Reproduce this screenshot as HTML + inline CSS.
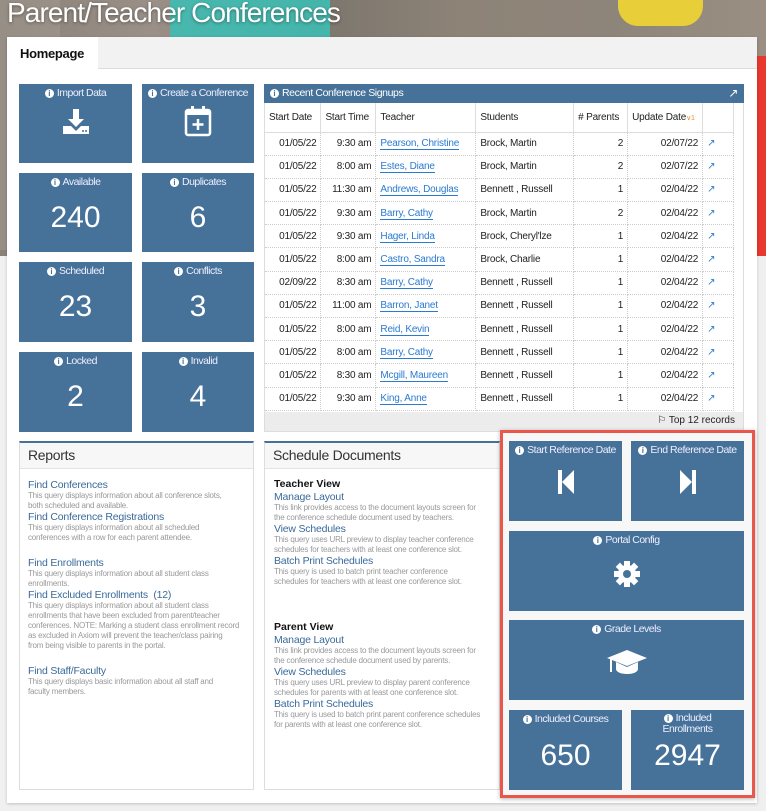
<!DOCTYPE html>
<html><head><meta charset="utf-8"><style>
*{box-sizing:border-box;margin:0;padding:0}
body{width:766px;height:811px;overflow:hidden;background:#f0f0f0;font-family:"Liberation Sans",sans-serif;position:relative}
.abs{position:absolute}
.bg{left:0;top:0;width:766px;height:256px;background:linear-gradient(90deg,#8a8178 0%,#9a9088 20%,#7b756c 40%,#8d8377 60%,#8e857a 80%,#9a8f82 100%)}
.title{left:7px;top:-3px;font-size:28px;color:#fff;letter-spacing:-0.9px;text-shadow:0 1px 3px rgba(0,0,0,.4)}
.panel{left:7px;top:37px;width:750px;height:766px;background:#fff;box-shadow:0 1px 3px rgba(0,0,0,.2)}
.tabbar{left:7px;top:37px;width:750px;height:32px;background:rgba(240,240,240,.85);border-bottom:1px solid #ddd}
.tab{left:7px;top:37px;width:91px;height:33px;background:#fff;font-weight:bold;font-size:13px;padding:9px 0 0 13px;color:#111;letter-spacing:-0.3px}
.tile{position:absolute;background:#46729a;color:#fff;text-align:center}
.tile .h{font-size:10.5px;margin-top:3px;color:#eef;letter-spacing:-0.5px;white-space:nowrap}
.tile .n{font-size:30px;margin-top:13px}
.i{display:inline-block;width:9px;height:9px;border-radius:50%;background:#fff;color:#46729a;font-size:8px;line-height:9px;font-weight:bold;vertical-align:0px;margin-right:3px;text-align:center;letter-spacing:0}
table{border-collapse:collapse;font-size:10px;color:#222;letter-spacing:-0.2px}
td{height:23.2px;border-bottom:1px dotted #ccc;border-right:1px dotted #ccc;padding:0 4px;white-space:nowrap}
th{height:29px;font-weight:normal;text-align:left;padding:0 4px;border-right:1px solid #ddd;border-bottom:1px solid #ddd;font-size:10px;white-space:nowrap}
.r{text-align:right}
a{color:#2a7ad0;text-decoration:none;border-bottom:1px solid #2a7ad0}
.box{position:absolute;border:1px solid #ddd;border-top:2px solid #46729a;background:#fff}
.box .hd{background:#f7f7f7;border-bottom:1px solid #e3e3e3;height:26px;font-size:14px;padding:4px 8px;color:#333;letter-spacing:-0.3px}
.lk{color:#3a6a9a;font-size:10.5px;line-height:12px;letter-spacing:-0.2px;white-space:nowrap}
.ds{color:#999;font-size:8px;line-height:10px;white-space:nowrap;letter-spacing:-0.2px}
.bh{font-weight:bold;font-size:10.5px;color:#111;line-height:13px}
</style></head><body>
<div class="abs bg"></div>
<div class="abs" style="left:170px;top:0;width:160px;height:130px;background:#3fbcb2;border-radius:0 0 70px 70px;opacity:.9"></div>
<div class="abs" style="left:618px;top:0;width:85px;height:26px;background:#e8cf3a;border-radius:0 0 20px 20px"></div>
<div class="abs" style="left:0;top:0;width:60px;height:250px;background:#a39b91;opacity:.5"></div>
<div class="abs" style="left:757px;top:56px;width:9px;height:200px;background:#e8382e"></div>
<div class="abs title">Parent/Teacher Conferences</div>
<div class="abs panel"></div>
<div class="abs tabbar"></div>
<div class="abs tab">Homepage</div>

<div class="tile" style="left:19px;top:84px;width:113px;height:79px"><div class="h"><span class="i">i</span>Import Data</div>
<svg width="30" height="30" viewBox="0 0 30 30" style="margin-top:8px"><path d="M12 2h6v10h5l-8 8-8-8h5z" fill="#fff"/><path d="M2 19h8l5 5 5-5h8v8H2z" fill="#fff"/><circle cx="22" cy="24" r="1" fill="#46729a"/><circle cx="25" cy="24" r="1" fill="#46729a"/></svg></div>
<div class="tile" style="left:142px;top:84px;width:112px;height:79px"><div class="h"><span class="i">i</span>Create a Conference</div>
<svg width="30" height="32" viewBox="0 0 30 32" style="margin-top:6px"><rect x="3" y="5" width="24" height="25" rx="2" fill="none" stroke="#fff" stroke-width="2.5"/><rect x="3" y="5" width="24" height="5" fill="#fff"/><rect x="8" y="1" width="3" height="7" fill="#fff"/><rect x="19" y="1" width="3" height="7" fill="#fff"/><path d="M15 14v11M9.5 19.5h11" stroke="#fff" stroke-width="2.5"/></svg></div>
<div class="tile" style="left:19px;top:173px;width:113px;height:79px"><div class="h"><span class="i">i</span>Available</div><div class="n">240</div></div>
<div class="tile" style="left:142px;top:173px;width:112px;height:79px"><div class="h"><span class="i">i</span>Duplicates</div><div class="n">6</div></div>
<div class="tile" style="left:19px;top:262px;width:113px;height:80px"><div class="h"><span class="i">i</span>Scheduled</div><div class="n">23</div></div>
<div class="tile" style="left:142px;top:262px;width:112px;height:80px"><div class="h"><span class="i">i</span>Conflicts</div><div class="n">3</div></div>
<div class="tile" style="left:19px;top:352px;width:113px;height:80px"><div class="h"><span class="i">i</span>Locked</div><div class="n">2</div></div>
<div class="tile" style="left:142px;top:352px;width:112px;height:80px"><div class="h"><span class="i">i</span>Invalid</div><div class="n">4</div></div>

<div class="abs" style="left:264px;top:84px;width:480px;height:19px;background:#46729a;color:#fff;font-size:10.5px;padding:3px 6px;letter-spacing:-0.4px"><span class="i">i</span>Recent Conference Signups<span style="position:absolute;right:6px;top:2px;font-size:12px">&#x2197;</span></div>
<div class="abs" style="left:264px;top:103px;width:480px;height:329px;border:1px solid #ddd;border-top:none;background:#fff">
<table style="width:469px">
<tr><th style="width:56px">Start Date</th><th style="width:55px">Start Time</th><th style="width:100px">Teacher</th><th style="width:98px">Students</th><th style="width:54px">#&nbsp;Parents</th><th style="width:75px">Update Date<span style="color:#e8902a;font-size:7px">&#x2228;1</span></th><th style="width:31px"></th></tr>
<tr><td class="r">01/05/22</td><td class="r">9:30 am</td><td><a>Pearson, Christine</a></td><td>Brock, Martin</td><td class="r">2</td><td class="r">02/07/22</td><td style="color:#2a7ad0">&#x2197;</td></tr>
<tr><td class="r">01/05/22</td><td class="r">8:00 am</td><td><a>Estes, Diane</a></td><td>Brock, Martin</td><td class="r">2</td><td class="r">02/07/22</td><td style="color:#2a7ad0">&#x2197;</td></tr>
<tr><td class="r">01/05/22</td><td class="r">11:30 am</td><td><a>Andrews, Douglas</a></td><td>Bennett , Russell</td><td class="r">1</td><td class="r">02/04/22</td><td style="color:#2a7ad0">&#x2197;</td></tr>
<tr><td class="r">01/05/22</td><td class="r">9:30 am</td><td><a>Barry, Cathy</a></td><td>Brock, Martin</td><td class="r">2</td><td class="r">02/04/22</td><td style="color:#2a7ad0">&#x2197;</td></tr>
<tr><td class="r">01/05/22</td><td class="r">9:30 am</td><td><a>Hager, Linda</a></td><td>Brock, Cheryl'lze</td><td class="r">1</td><td class="r">02/04/22</td><td style="color:#2a7ad0">&#x2197;</td></tr>
<tr><td class="r">01/05/22</td><td class="r">8:00 am</td><td><a>Castro, Sandra</a></td><td>Brock, Charlie</td><td class="r">1</td><td class="r">02/04/22</td><td style="color:#2a7ad0">&#x2197;</td></tr>
<tr><td class="r">02/09/22</td><td class="r">8:30 am</td><td><a>Barry, Cathy</a></td><td>Bennett , Russell</td><td class="r">1</td><td class="r">02/04/22</td><td style="color:#2a7ad0">&#x2197;</td></tr>
<tr><td class="r">01/05/22</td><td class="r">11:00 am</td><td><a>Barron, Janet</a></td><td>Bennett , Russell</td><td class="r">1</td><td class="r">02/04/22</td><td style="color:#2a7ad0">&#x2197;</td></tr>
<tr><td class="r">01/05/22</td><td class="r">8:00 am</td><td><a>Reid, Kevin</a></td><td>Bennett , Russell</td><td class="r">1</td><td class="r">02/04/22</td><td style="color:#2a7ad0">&#x2197;</td></tr>
<tr><td class="r">01/05/22</td><td class="r">8:00 am</td><td><a>Barry, Cathy</a></td><td>Bennett , Russell</td><td class="r">1</td><td class="r">02/04/22</td><td style="color:#2a7ad0">&#x2197;</td></tr>
<tr><td class="r">01/05/22</td><td class="r">8:30 am</td><td><a>Mcgill, Maureen</a></td><td>Bennett , Russell</td><td class="r">1</td><td class="r">02/04/22</td><td style="color:#2a7ad0">&#x2197;</td></tr>
<tr><td class="r">01/05/22</td><td class="r">9:30 am</td><td><a>King, Anne</a></td><td>Bennett , Russell</td><td class="r">1</td><td class="r">02/04/22</td><td style="color:#2a7ad0">&#x2197;</td></tr>
</table>
<div style="position:absolute;left:0;right:0;bottom:0;height:19px;background:#ececec;font-size:10px;text-align:right;padding:3px 8px;color:#222">&#x2690; Top 12 records</div>
</div>

<div class="box" style="left:19px;top:441px;width:235px;height:349px"><div class="hd">Reports</div>
<div style="padding:10px 8px">
<div class="lk">Find Conferences</div><div class="ds">This query displays information about all conference slots,<br>both scheduled and available.</div>
<div class="lk">Find Conference Registrations</div><div class="ds">This query displays information about all scheduled<br>conferences with a row for each parent attendee.</div>
<div style="height:14px"></div>
<div class="lk">Find Enrollments</div><div class="ds">This query displays information about all student class<br>enrollments.</div>
<div class="lk">Find Excluded Enrollments&nbsp; (12)</div><div class="ds">This query displays information about all student class<br>enrollments that have been excluded from parent/teacher<br>conferences. NOTE: Marking a student class enrollment record<br>as excluded in Axiom will prevent the teacher/class pairing<br>from being visible to parents in the portal.</div>
<div style="height:14px"></div>
<div class="lk">Find Staff/Faculty</div><div class="ds">This query displays basic information about all staff and<br>faculty members.</div>
</div></div>

<div class="box" style="left:264px;top:441px;width:236px;height:349px"><div class="hd">Schedule Documents</div>
<div style="padding:9px 9px">
<div class="bh">Teacher View</div>
<div class="lk">Manage Layout</div><div class="ds">This link provides access to the document layouts screen for<br>the conference schedule document used by teachers.</div>
<div class="lk">View Schedules</div><div class="ds">This query uses URL preview to display teacher conference<br>schedules for teachers with at least one conference slot.</div>
<div class="lk">Batch Print Schedules</div><div class="ds">This query is used to batch print teacher conference<br>schedules for teachers with at least one conference slot.</div>
<div style="height:34px"></div>
<div class="bh">Parent View</div>
<div class="lk">Manage Layout</div><div class="ds">This link provides access to the document layouts screen for<br>the conference schedule document used by parents.</div>
<div class="lk">View Schedules</div><div class="ds">This query uses URL preview to display parent conference<br>schedules for parents with at least one conference slot.</div>
<div class="lk">Batch Print Schedules</div><div class="ds">This query is used to batch print parent conference schedules<br>for parents with at least one conference slot.</div>
</div></div>

<div class="abs" style="left:500px;top:430px;width:255px;height:368px;border:3px solid #e9564a;background:#f7f7f7;box-shadow:0 1px 4px rgba(0,0,0,.3)"></div>
<div class="tile" style="left:509px;top:441px;width:113px;height:80px"><div class="h"><span class="i">i</span>Start Reference Date</div>
<svg width="20" height="28" viewBox="0 0 20 28" style="margin-top:12px"><rect x="2" y="2" width="4" height="24" fill="#fff"/><path d="M18 2v24L6 14z" fill="#fff"/></svg></div>
<div class="tile" style="left:631px;top:441px;width:113px;height:80px"><div class="h"><span class="i">i</span>End Reference Date</div>
<svg width="20" height="28" viewBox="0 0 20 28" style="margin-top:12px"><rect x="14" y="2" width="4" height="24" fill="#fff"/><path d="M2 2v24l12-12z" fill="#fff"/></svg></div>
<div class="tile" style="left:509px;top:531px;width:235px;height:80px"><div class="h"><span class="i">i</span>Portal Config</div>
<svg width="28" height="28" viewBox="0 0 28 28" style="margin-top:14px"><g fill="#fff" transform="translate(14 14)"><circle r="9"/><rect x="-3" y="-13" width="6" height="26"/><rect x="-3" y="-13" width="6" height="26" transform="rotate(45)"/><rect x="-3" y="-13" width="6" height="26" transform="rotate(90)"/><rect x="-3" y="-13" width="6" height="26" transform="rotate(135)"/><circle r="4" fill="#46729a"/></g></svg></div>
<div class="tile" style="left:509px;top:620px;width:235px;height:80px"><div class="h"><span class="i">i</span>Grade Levels</div>
<svg width="42" height="30" viewBox="0 0 42 30" style="margin-top:12px"><path d="M21 3L41 11 21 19 1 11z" fill="#fff"/><path d="M10 15v7c0 3 5 5 11 5s11-2 11-5v-7l-11 5z" fill="#fff"/><rect x="4" y="12" width="2" height="13" fill="#fff"/></svg></div>
<div class="tile" style="left:509px;top:710px;width:113px;height:80px"><div class="h"><span class="i">i</span>Included Courses</div><div class="n" style="font-size:30px;margin-top:14px">650</div></div>
<div class="tile" style="left:631px;top:710px;width:113px;height:80px"><div class="h" style="line-height:11px"><span class="i">i</span>Included<br>Enrollments</div><div class="n" style="font-size:30px;margin-top:4px">2947</div></div>
</body></html>
